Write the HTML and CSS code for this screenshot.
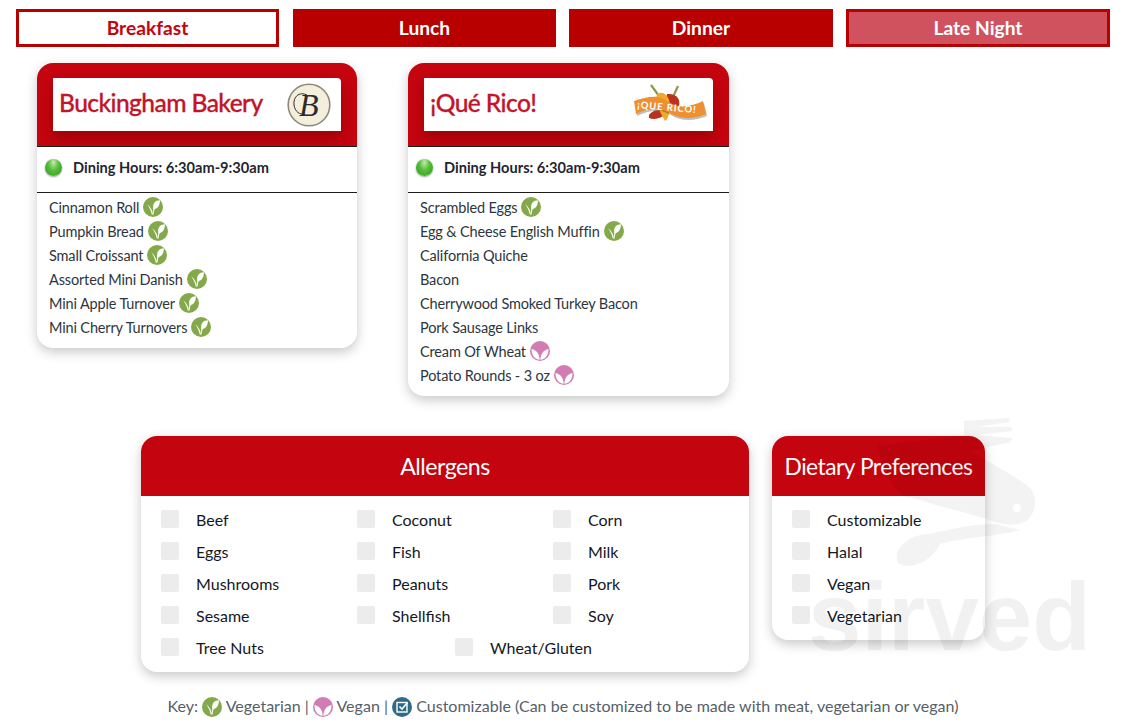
FILE: index.html
```html
<!DOCTYPE html>
<html lang="en">
<head>
    <meta charset="UTF-8">
    <meta name="viewport" content="width=device-width, initial-scale=1.0">
    <title>Dining Menu</title>
    <link rel="stylesheet" href="styles.css">
</head>
<body>
    <svg class="icon-defs" width="0" height="0">
        <symbol id="veg" viewBox="0 0 20 20">
            <circle cx="10" cy="10" r="10" fill="#84a94a"/>
            <path d="M9.8 17.5C9.6 13.8 8 10.6 4.4 7.2C6.6 11 8 13.4 8.8 17.5Z" fill="#fff"/>
            <path d="M10 17.5C10 14.4 10.6 12.6 12 10.4" fill="none" stroke="#fff" stroke-width="1.1"/>
            <path d="M17 3.2C12.4 3.4 9.4 6 10.2 12.4C14.6 11.8 16.8 8.6 17 3.2Z" fill="#fff"/>
        </symbol>
        <symbol id="vegan" viewBox="0 0 20 20">
            <circle cx="10" cy="10" r="10" fill="#d17cb3"/>
            <path d="M1.5 8C6 9 9.3 12 9.7 18.8C4.6 18.6 1.4 14 1.5 8Z" fill="#fff"/>
            <path d="M18.5 8C14 9 10.7 12 10.3 18.8C15.4 18.6 18.6 14 18.5 8Z" fill="#fff"/>
        </symbol>
        <symbol id="custom" viewBox="0 0 20 20">
            <circle cx="10" cy="10" r="10" fill="#2f6b87"/>
            <rect x="5" y="5.5" width="10" height="9.5" fill="none" stroke="#fff" stroke-width="1.4"/>
            <path d="M7.5 9.5L10 12L15.5 5.5" fill="none" stroke="#fff" stroke-width="1.6"/>
        </symbol>
    </svg>

    <nav class="tabs">
        <a class="tab active">Breakfast</a>
        <a class="tab">Lunch</a>
        <a class="tab wide">Dinner</a>
        <a class="tab wide faded">Late Night</a>
    </nav>

    <section class="venues">
        <div class="venue">
            <div class="venue-head">
                <div class="venue-title">
                    <h2>Buckingham Bakery</h2>
                    <svg class="b-logo" width="44" height="44" viewBox="0 0 44 44">
                        <circle cx="22" cy="22" r="20.8" fill="#f4eedd" stroke="#8d8878" stroke-width="1.6"/>
                        <path d="M20 12C12 8 6 14 7 22C8 29 13 32 18 31" fill="none" stroke="#2c2c2c" stroke-width="1"/>
                        <text x="12" y="33" class="b-letter">B</text>
                    </svg>
                </div>
            </div>
            <div class="hours"><span class="led"></span>Dining Hours: 6:30am-9:30am</div>
            <ul class="items">
                <li>Cinnamon Roll <svg class="diet"><use href="#veg"/></svg></li>
                <li>Pumpkin Bread <svg class="diet"><use href="#veg"/></svg></li>
                <li>Small Croissant <svg class="diet"><use href="#veg"/></svg></li>
                <li>Assorted Mini Danish <svg class="diet"><use href="#veg"/></svg></li>
                <li>Mini Apple Turnover <svg class="diet"><use href="#veg"/></svg></li>
                <li>Mini Cherry Turnovers <svg class="diet"><use href="#veg"/></svg></li>
            </ul>
        </div>

        <div class="venue">
            <div class="venue-head">
                <div class="venue-title">
                    <h2>¡Qué Rico!</h2>
                    <svg class="rico-logo" width="84" height="44" viewBox="0 0 84 44">
                        <path d="M28 2L36 13M55 3L50 14" stroke="#8a9a4a" stroke-width="2.2" fill="none"/>
                        <path d="M44 11C54 10 59 17 55 26L42 28Z" fill="#b8321e"/>
                        <path d="M26 32C30 26 38 26 44 30C38 36 31 37 26 35Z" fill="#b8321e"/>
                        <path d="M34 11C41 7 48 14 47 26C46 34 43 38 42 38C39 32 31 21 34 11Z" fill="#f0a92a"/>
                        <path class="rico-shadow" d="M11 18C20 15 28 13 35 14C43 16 48 22 56 23C64 24 72 22 80 18L83 31C74 35 64 36 56 34C48 32 42 26 36 26C28 25 20 28 13 31Z"/>
                        <path d="M11 18C20 15 28 13 35 14C43 16 48 22 56 23C64 24 72 22 80 18L83 31C74 35 64 36 56 34C48 32 42 26 36 26C28 25 20 28 13 31Z" fill="#ee9030"/>
                        <text x="14" y="25" class="rico-text" transform="rotate(5 14 25)">¡QUE RICO!</text>
                    </svg>
                </div>
            </div>
            <div class="hours"><span class="led"></span>Dining Hours: 6:30am-9:30am</div>
            <ul class="items">
                <li>Scrambled Eggs <svg class="diet"><use href="#veg"/></svg></li>
                <li>Egg &amp; Cheese English Muffin <svg class="diet"><use href="#veg"/></svg></li>
                <li>California Quiche</li>
                <li>Bacon</li>
                <li>Cherrywood Smoked Turkey Bacon</li>
                <li>Pork Sausage Links</li>
                <li>Cream Of Wheat <svg class="diet"><use href="#vegan"/></svg></li>
                <li>Potato Rounds - 3 oz <svg class="diet"><use href="#vegan"/></svg></li>
            </ul>
        </div>
    </section>

    <section class="filters">
        <div class="panel allergens">
            <h3>Allergens</h3>
            <div class="checks">
                <label><i></i>Beef</label>
                <label><i></i>Coconut</label>
                <label><i></i>Corn</label>
                <label><i></i>Eggs</label>
                <label><i></i>Fish</label>
                <label><i></i>Milk</label>
                <label><i></i>Mushrooms</label>
                <label><i></i>Peanuts</label>
                <label><i></i>Pork</label>
                <label><i></i>Sesame</label>
                <label><i></i>Shellfish</label>
                <label><i></i>Soy</label>
            </div>
            <div class="checks last">
                <label><i></i>Tree Nuts</label>
                <label><i></i>Wheat/Gluten</label>
            </div>
        </div>
        <div class="panel dietary">
            <h3>Dietary Preferences</h3>
            <div class="checks single">
                <label><i></i>Customizable</label>
                <label><i></i>Halal</label>
                <label><i></i>Vegan</label>
                <label><i></i>Vegetarian</label>
            </div>
        </div>
    </section>

    <p class="key">Key: <svg class="diet"><use href="#veg"/></svg> Vegetarian | <svg class="diet"><use href="#vegan"/></svg> Vegan | <svg class="diet"><use href="#custom"/></svg> Customizable (Can be customized to be made with meat, vegetarian or vegan)</p>

    <!-- watermark sits over everything -->
    <div class="watermark">
        <svg class="mark-art" width="180" height="170" viewBox="0 0 180 170">
            <path d="M94 11L139 8L140 12L106 17L141 17L142 21L107 25L142 28L141 32L108 39C104 42 100 42 97 38L94 26Z"/>
            <path d="M8 36L96 25L100 42C120 52 145 66 160 78C167 86 167 100 158 110C148 116 136 116 125 112C90 100 50 92 33 86C20 74 12 56 8 36Z"/>
            <path class="mark-gap" d="M40 88C80 100 120 114 140 117C152 118 160 114 166 106"/>
            <path d="M150 120C130 126 90 128 70 134C60 154 38 160 28 153C22 140 38 124 60 124C84 118 106 114 126 114Z"/>
            <circle class="mark-hole" cx="147" cy="98" r="4"/>
        </svg>
        <span class="mark-text">sirved</span>
    </div>
</body>
</html>
```

FILE: styles.css
```css
* { box-sizing: border-box; }
html, body { margin: 0; height: 727px; overflow: hidden; }
body { position: relative; padding: 9px 16px 0; background: #fff; color: #2d3640; font-family: Lato, "Open Sans", sans-serif; font-size: 14.5px; }
.icon-defs { display: block; height: 0; }

.tabs { display: flex; gap: 13px; width: 1094px; }
.tab { display: flex; align-items: center; justify-content: center; width: 263px; height: 38px; padding-bottom: 2px; background: #b90000; border: 3px solid #b90000; color: #fff; font-size: 19.2px; font-weight: 700; }
.tab:first-child { margin-right: 1px; }
.tab.wide { width: 264px; }
.tab.active { background: #fff; color: #c4040e; }
.tab.faded { background: #d0525e; }

.venues { display: flex; gap: 51px; margin: 16px 0 0 21px; align-items: flex-start; }
.venue { width: 320px; background: #fff; border-radius: 16px; box-shadow: 0 4px 12px rgba(0,0,0,0.22); overflow: hidden; }
.venue:last-child { width: 321px; }
.venue-head { height: 84px; padding: 15px 16px 0; background: #c4040e; border-bottom: 1px solid #1c1c1c; }
.venue-title { display: flex; align-items: center; justify-content: space-between; height: 53px; padding: 0 6px; background: #fff; border-radius: 0 4px 0 0; box-shadow: 0 8px 12px rgba(90,0,0,0.35); }
.venue-title h2 { margin: 0 0 4px; color: #c4142a; font-size: 24.6px; font-weight: 500; letter-spacing: -0.6px; -webkit-text-stroke: 0.3px #c4142a; }
.b-logo { margin-right: 4px; }
.b-letter { fill: #2c2c2c; font-family: "Liberation Serif", serif; font-style: italic; font-size: 32px; }
.rico-shadow { fill: rgba(0,0,0,0.25); transform: translate(1px, 2px); }
.rico-text { fill: #fff; font-size: 9.5px; font-weight: 700; letter-spacing: 0.9px; }

.hours { display: flex; align-items: center; height: 46px; padding: 0 8px 4px; border-bottom: 1px solid #1c1c1c; color: #1f2530; font-size: 14.6px; font-weight: 700; }
.led { width: 17px; height: 17px; margin-right: 11px; border-radius: 50%; background: radial-gradient(ellipse at 50% 20%, #c8e8b0 0, #5cc040 40%, #1f9a10 100%); box-shadow: 0 1px 2px rgba(0,0,0,0.4); }

.items { margin: 0; padding: 2px 12px 9px; list-style: none; }
.items li { display: flex; align-items: center; gap: 4px; height: 24px; letter-spacing: -0.15px; }
.diet { width: 20px; height: 20px; vertical-align: -5px; }

.filters { display: flex; gap: 23px; align-items: flex-start; margin: 40px 0 0 125px; }
.panel { background: #fff; border-radius: 16px; box-shadow: 0 4px 12px rgba(0,0,0,0.22); overflow: hidden; color: #14181f; font-size: 16px; }
.panel h3 { display: flex; align-items: center; justify-content: center; height: 60px; margin: 0; background: #c4040e; color: #fff; font-size: 23.2px; font-weight: 400; letter-spacing: -0.5px; }
.allergens { width: 608px; height: 236px; }
.dietary { width: 213px; height: 204px; }
.dietary h3 { font-size: 22.8px; white-space: nowrap; }
.checks { display: grid; grid-template-columns: repeat(3, 196px); padding: 8px 0 0 20px; }
.checks.last { grid-template-columns: 294px 294px; padding-top: 0; }
.checks.single { grid-template-columns: 1fr; }
.checks label { display: flex; align-items: center; height: 32px; padding-bottom: 2px; }
.checks i { width: 18px; height: 18px; margin-right: 17px; margin-top: -1px; background: #ececec; border-radius: 2px; }

.key { margin: 24px 0 0; padding-right: 18px; text-align: center; color: #56606a; font-size: 16.05px; line-height: 20px; white-space: nowrap; }

.watermark { position: absolute; left: 0; top: 0; width: 1144px; height: 727px; opacity: 0.05; pointer-events: none; }
.mark-art { position: absolute; left: 870px; top: 410px; fill: #000; opacity: 0.8; }
.mark-hole { fill: #fff; }
.mark-gap { fill: none; stroke: #fff; stroke-width: 1.5; }
.mark-text { position: absolute; left: 808px; top: 557px; color: #000; font-family: "Liberation Sans", sans-serif; font-size: 96px; font-weight: 700; line-height: 120px; }
```
